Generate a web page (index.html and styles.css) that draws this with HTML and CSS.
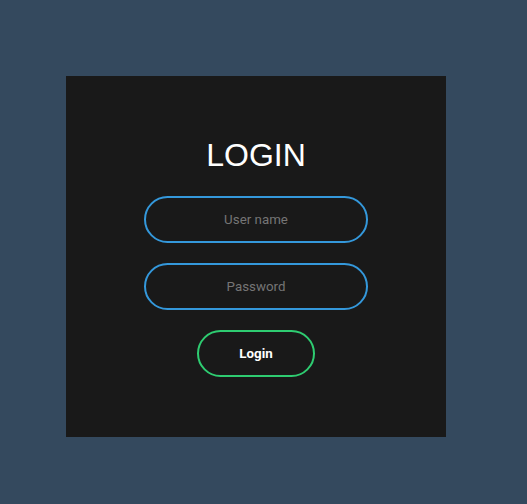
FILE: index.html
```html
<!DOCTYPE html>
<html lang="en">
<head>
  <meta charset="UTF-8" />
  <meta name="viewport" content="width=device-width, initial-scale=1.0" />
  <title>Login</title>
  <link rel="stylesheet" href="styles.css">
</head>
<body>
  <form class="box" action="#" method="post">
    <h1>Login</h1>
    <input type="text" name="username" placeholder="User name">
    <input type="password" name="password" placeholder="Password">
    <input type="submit" value="Login">
  </form>
</body>
</html>
```

FILE: styles.css
```css
body {
  margin: 0;
  background: #34495e;
  font-family: Roboto, 'Liberation Sans', sans-serif;
}
.box {
  width: 300px;
  padding: 40px;
  margin: 76px 0 0 66px;
  background: #191919;
  text-align: center;
}
.box h1 {
  color: #fff;
  text-transform: uppercase;
  font-family: 'Liberation Sans', Arial, sans-serif;
  font-size: 32px;
  font-weight: 500;
  margin: 0.67em 0;
}
.box input[type="text"],
.box input[type="password"] {
  display: block;
  margin: 20px auto;
  width: 200px;
  padding: 14px 10px;
  background: none;
  border: 2px solid #3498db;
  border-radius: 24px;
  outline: none;
  color: #fff;
  text-align: center;
  font-family: Roboto, sans-serif;
  font-size: 13.33px;
}
.box input::placeholder {
  color: #757575;
}
.box input[type="submit"] {
  display: block;
  margin: 20px auto;
  padding: 14px 40px;
  background: none;
  border: 2px solid #2ecc71;
  border-radius: 24px;
  outline: none;
  color: #fff;
  font-family: Roboto, sans-serif;
  font-size: 13.33px;
  font-weight: bold;
  cursor: pointer;
}
```
